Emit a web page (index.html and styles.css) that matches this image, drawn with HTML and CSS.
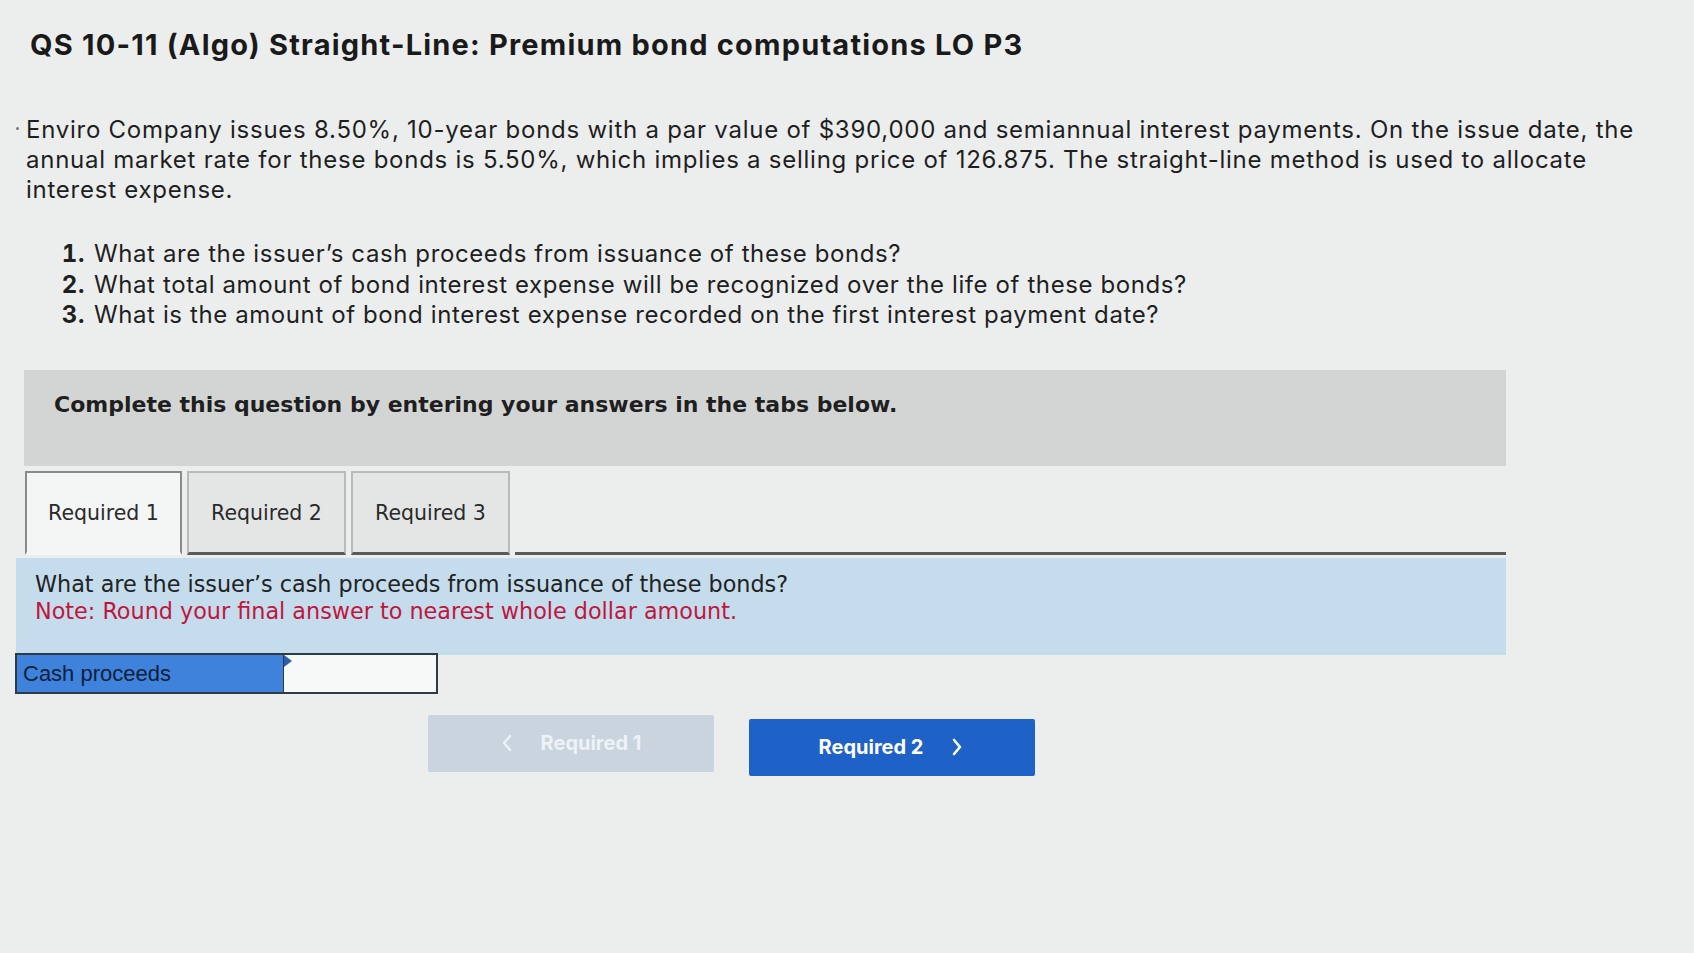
FILE: index.html
```html
<!DOCTYPE html>
<html lang="en">
<head>
  <meta charset="UTF-8" />
  <title>QS 10-11 (Algo) Straight-Line</title>
  <link rel="stylesheet" href="styles.css">
</head>
<body>
  <div class="page">
    <h1 class="title">QS 10-11 (Algo) Straight-Line: Premium bond computations LO P3</h1>

    <div class="intro">
      <span class="dot"></span>
      <p>Enviro Company issues 8.50%, 10-year bonds with a par value of $390,000 and semiannual interest payments. On the issue date, the annual market rate for these bonds is 5.50%, which implies a selling price of 126.875. The straight-line method is used to allocate interest expense.</p>
    </div>

    <ol class="questions">
      <li>What are the issuer’s cash proceeds from issuance of these bonds?</li>
      <li>What total amount of bond interest expense will be recognized over the life of these bonds?</li>
      <li>What is the amount of bond interest expense recorded on the first interest payment date?</li>
    </ol>

    <div class="instructions">Complete this question by entering your answers in the tabs below.</div>

    <div class="tabs">
      <div class="tab active">Required 1</div>
      <div class="tab">Required 2</div>
      <div class="tab">Required 3</div>
      <div class="tab-rest"></div>
    </div>

    <div class="panel">
      <p>What are the issuer’s cash proceeds from issuance of these bonds?</p>
      <p class="note">Note: Round your final answer to nearest whole dollar amount.</p>
    </div>

    <div class="answer-row">
      <div class="answer-label">Cash proceeds</div>
      <div class="answer-input"></div>
    </div>

    <div class="nav">
      <button class="nav-btn prev">
        <svg width="12" height="18" viewBox="0 0 12 18"><path d="M9 2 L3 9 L9 16" fill="none" stroke="currentColor" stroke-width="2.4" stroke-linecap="round" stroke-linejoin="round"/></svg>
        <span>Required 1</span>
      </button>
      <button class="nav-btn next">
        <span>Required 2</span>
        <svg width="12" height="18" viewBox="0 0 12 18"><path d="M3 2 L9 9 L3 16" fill="none" stroke="currentColor" stroke-width="2.6" stroke-linecap="round" stroke-linejoin="round"/></svg>
      </button>
    </div>
  </div>
</body>
</html>
```

FILE: styles.css
```css
body {
  margin: 0;
  background: #eceeee;
  color: #1f1f1f;
  font-family: Inter, Lato, sans-serif;
}

.page {
  padding: 26px 0 0 16px;
  width: 1490px;
}

.title {
  margin: 0 0 0 14px;
  font-size: 29px;
  font-weight: bold;
  line-height: 38px;
  color: #1a1a1a;
  letter-spacing: 1.2px;
}

.intro {
  display: flex;
  gap: 7px;
  margin-top: 51px;
  width: 1660px;
}

.dot {
  width: 3px;
  height: 3px;
  border-radius: 50%;
  background: #777;
  margin-top: 12px;
  flex-shrink: 0;
}

.intro p {
  margin: 0;
  font-size: 24px;
  line-height: 30px;
  letter-spacing: 0.75px;
}

.questions {
  margin: 34px 0 0 0;
  padding-left: 76px;
  font-size: 24px;
  line-height: 30.5px;
  letter-spacing: 0.6px;
}

.questions li {
  padding-left: 2px;
}

.questions li::marker {
  font-weight: bold;
}

/* caixa cinza das instrucoes */
.instructions {
  margin: 39px 0 0 8px;
  height: 96px;
  box-sizing: border-box;
  padding: 22px 30px;
  background: #d3d5d5;
  font-family: "DejaVu Sans", Verdana, sans-serif;
  font-weight: bold;
  font-size: 22px;
  line-height: 26px;
}

.tabs {
  display: flex;
  margin-top: 5px;
  padding-left: 9px;
  font-family: "DejaVu Sans", Verdana, sans-serif;
  font-size: 20.5px;
  color: #2a2a2a;
}

.tab {
  width: 159px;
  height: 84px;
  box-sizing: border-box;
  margin-right: 5px;
  border: 2px solid #b9b9b9;
  border-bottom: 3px solid #5b5b5b;
  background: #e4e6e6;
  display: flex;
  align-items: center;
  justify-content: center;
  padding-top: 2px;
}

.tab.active {
  width: 157px;
  background: #f4f5f5;
  border-color: #8a8a8a;
  border-bottom-color: #f4f5f5;
}

.tab-rest {
  flex: 1;
  border-bottom: 3px solid #5b5b5b;
}

.panel {
  margin-top: 3px;
  padding: 13px 19px 30px;
  background: #c4dcec;
  font-family: "DejaVu Sans", Verdana, sans-serif;
  font-size: 22.3px;
  line-height: 27px;
  color: #222;
}

.panel p {
  margin: 0;
}

.panel .note {
  color: #c0163e;
}

.answer-row {
  display: flex;
  width: 423px;
  height: 41px;
  box-sizing: border-box;
  border: 2px solid #2f3a48;
  margin-top: -2px;
  margin-left: -1px;
}

.answer-label {
  width: 260px;
  background: #3e82dc;
  font-family: "Liberation Sans", Arial, sans-serif;
  font-size: 22px;
  line-height: 37px;
  padding-left: 6px;
  color: #10213a;
  border-right: 1px solid #2f3a48;
}

.answer-input {
  flex: 1;
  background: #f7f8f8;
  position: relative;
}

.answer-input::before {
  content: "";
  position: absolute;
  left: 0;
  top: 0;
  border-left: 8px solid #2d5fa8;
  border-top: 6px solid transparent;
  border-bottom: 6px solid transparent;
}

.nav {
  display: flex;
  gap: 35px;
  margin: 21px 0 0 412px;
}

.nav-btn {
  width: 286px;
  height: 57px;
  border: none;
  border-radius: 2px;
  font-family: Inter, Lato, sans-serif;
  font-weight: bold;
  font-size: 20px;
  display: flex;
  align-items: center;
  justify-content: center;
  gap: 28px;
}

.nav-btn.prev {
  background: #c9d4de;
  color: #edf2f7;
  padding-right: 6px;
}

.nav-btn.next {
  background: #1f62c7;
  color: #ffffff;
  margin-top: 4px;
  padding-left: 4px;
}
```
